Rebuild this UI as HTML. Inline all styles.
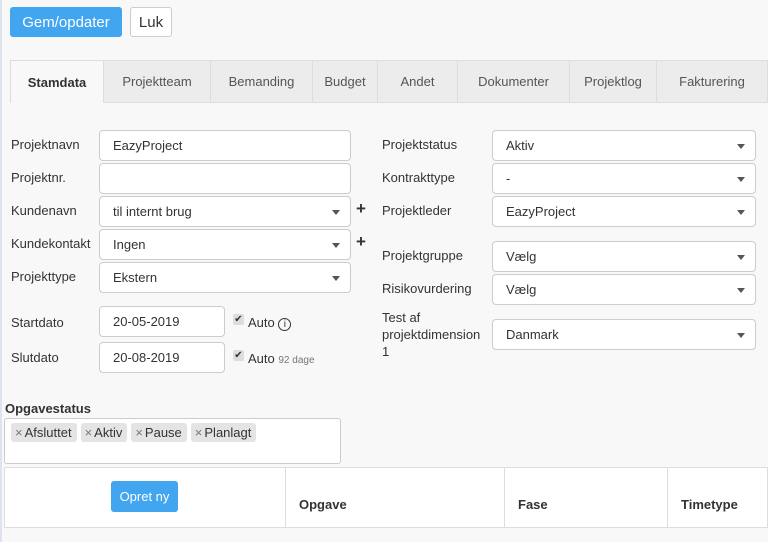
<!DOCTYPE html><html><head><style>
*{box-sizing:border-box}
body{margin:0;width:768px;height:542px;background:#f8f8f8;font-family:"Liberation Sans",sans-serif;font-size:13px;color:#333;position:relative;overflow:hidden}
.a{position:absolute}
.btn{position:absolute;border-radius:3px;font-size:15px;display:flex;align-items:center;justify-content:center}
.tab{position:absolute;top:60px;height:43px;background:#ececec;border:1px solid #ddd;display:flex;align-items:center;justify-content:center;color:#555;font-size:13px}
.lab{position:absolute;font-size:13px;color:#333}
.in{position:absolute;background:#fff;border:1px solid #ccc;border-radius:4px;height:31px;padding-left:13px;display:flex;align-items:center;font-size:13px}
.sel::after{content:"";position:absolute;right:10px;top:13px;border-left:4px solid transparent;border-right:4px solid transparent;border-top:5px solid #555}
.plus{position:absolute;font-size:17px;font-weight:bold;color:#333}
.tag{display:inline-block;background:#e4e4e4;border-radius:3px;padding:2px 5px 2px 4px;margin-right:4px;font-size:13px;color:#333}
.tag b{font-weight:normal;color:#777;margin-right:2px}
</style></head><body>
<div class="a" style="left:0;top:0;width:2px;height:542px;background:#dde4ee"></div>
<div class="btn" style="left:10px;top:7px;width:112px;height:30px;background:#42a5f0;color:#fff">Gem/opdater</div>
<div class="btn" style="left:130px;top:7px;width:42px;height:30px;background:#fff;border:1px solid #ccc;color:#333">Luk</div>
<div class="tab" style="left:10px;width:94px;background:#f8f8f8;border-bottom:none;font-weight:bold;color:#333">Stamdata</div>
<div class="tab" style="left:103px;width:108px">Projektteam</div>
<div class="tab" style="left:210px;width:103px">Bemanding</div>
<div class="tab" style="left:312px;width:66px">Budget</div>
<div class="tab" style="left:377px;width:81px">Andet</div>
<div class="tab" style="left:457px;width:113px">Dokumenter</div>
<div class="tab" style="left:569px;width:88px">Projektlog</div>
<div class="tab" style="left:656px;width:112px">Fakturering</div>

<div class="lab" style="left:11px;top:137px">Projektnavn</div><div class="in" style="left:99px;top:130px;width:252px">EazyProject</div>
<div class="lab" style="left:11px;top:170px">Projektnr.</div><div class="in" style="left:99px;top:163px;width:252px"></div>
<div class="lab" style="left:11px;top:203px">Kundenavn</div><div class="in sel" style="left:99px;top:196px;width:252px">til internt brug</div><div class="plus" style="left:356px;top:199px">+</div>
<div class="lab" style="left:11px;top:236px">Kundekontakt</div><div class="in sel" style="left:99px;top:229px;width:252px">Ingen</div><div class="plus" style="left:356px;top:232px">+</div>
<div class="lab" style="left:11px;top:269px">Projekttype</div><div class="in sel" style="left:99px;top:262px;width:252px">Ekstern</div>
<div class="lab" style="left:11px;top:315px">Startdato</div><div class="in" style="left:99px;top:306px;width:126px">20-05-2019</div>
<div class="lab" style="left:11px;top:350px">Slutdato</div><div class="in" style="left:99px;top:342px;width:126px">20-08-2019</div>
<div class="a" style="left:233px;top:314px;width:11px;height:11px;background:#ddd;border-radius:2px;font-size:10px;line-height:11px;text-align:center">✔</div><div class="lab" style="left:248px;top:315px">Auto <span style="border:1px solid #333;border-radius:50%;display:inline-block;width:13px;height:13px;font-size:10px;line-height:12px;text-align:center">i</span></div>
<div class="a" style="left:233px;top:350px;width:11px;height:11px;background:#ddd;border-radius:2px;font-size:10px;line-height:11px;text-align:center">✔</div><div class="lab" style="left:248px;top:351px">Auto <span style="font-size:10px;color:#777">92 dage</span></div>

<div class="lab" style="left:382px;top:137px">Projektstatus</div><div class="in sel" style="left:492px;top:130px;width:264px">Aktiv</div>
<div class="lab" style="left:382px;top:170px">Kontrakttype</div><div class="in sel" style="left:492px;top:163px;width:264px">-</div>
<div class="lab" style="left:382px;top:203px">Projektleder</div><div class="in sel" style="left:492px;top:196px;width:264px">EazyProject</div>
<div class="lab" style="left:382px;top:248px">Projektgruppe</div><div class="in sel" style="left:492px;top:241px;width:264px">Vælg</div>
<div class="lab" style="left:382px;top:281px">Risikovurdering</div><div class="in sel" style="left:492px;top:274px;width:264px">Vælg</div>
<div class="lab" style="left:382px;top:309px;line-height:17px">Test af<br>projektdimension<br>1</div><div class="in sel" style="left:492px;top:319px;width:264px">Danmark</div>

<div class="lab" style="left:5px;top:401px;font-weight:bold">Opgavestatus</div>
<div class="a" style="left:4px;top:418px;width:337px;height:46px;background:#fff;border:1px solid #ccc;border-radius:3px;padding:4px 6px"><span class="tag"><b>×</b>Afsluttet</span><span class="tag"><b>×</b>Aktiv</span><span class="tag"><b>×</b>Pause</span><span class="tag"><b>×</b>Planlagt</span></div>
<div class="a" style="left:4px;top:467px;width:764px;height:61px;background:#fff;border:1px solid #ddd"></div>
<div class="a" style="left:285px;top:467px;width:1px;height:61px;background:#ddd"></div>
<div class="a" style="left:504px;top:467px;width:1px;height:61px;background:#ddd"></div>
<div class="a" style="left:667px;top:467px;width:1px;height:61px;background:#ddd"></div>
<div class="btn" style="left:111px;top:481px;width:67px;height:31px;background:#42a5f0;color:#fff;font-size:13px">Opret ny</div>
<div class="lab" style="left:299px;top:497px;font-weight:bold;font-size:13px">Opgave</div>
<div class="lab" style="left:518px;top:497px;font-weight:bold;font-size:13px">Fase</div>
<div class="lab" style="left:681px;top:497px;font-weight:bold;font-size:13px">Timetype</div>
</body></html>
